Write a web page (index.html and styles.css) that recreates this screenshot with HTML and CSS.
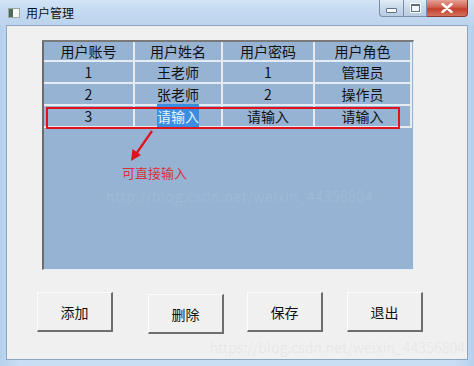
FILE: index.html
```html
<!DOCTYPE html>
<html lang="zh-CN">
  <head>
    <meta charset="UTF-8" />
    <title>用户管理</title>
    <link rel="stylesheet" href="styles.css">
  </head>
  <body>
    <div class="window">
      <div class="titlebar">
        <span class="app-icon"><span class="app-icon-side"></span></span>
        <span class="title">用户管理</span>
        <div class="caption-buttons">
          <span class="cap cap-min"><span class="glyph-min"></span></span>
          <span class="cap cap-max"><span class="glyph-max"></span></span>
          <span class="cap cap-close">
            <svg width="12" height="10" viewBox="0 0 12 10">
              <path d="M1.5 1 L10.5 9 M10.5 1 L1.5 9" stroke="#fff" stroke-width="2.4" stroke-linecap="round"/>
            </svg>
          </span>
        </div>
      </div>

      <div class="client">
        <div class="grid">
          <table class="users">
            <thead>
              <tr>
                <th class="c1">用户账号</th>
                <th class="c2">用户姓名</th>
                <th class="c3">用户密码</th>
                <th class="c4">用户角色</th>
              </tr>
            </thead>
            <tbody>
              <tr>
                <td>1</td>
                <td>王老师</td>
                <td>1</td>
                <td>管理员</td>
              </tr>
              <tr>
                <td>2</td>
                <td>张老师</td>
                <td>2</td>
                <td>操作员</td>
              </tr>
              <tr>
                <td>3</td>
                <td><span class="selected">请输入</span></td>
                <td>请输入</td>
                <td>请输入</td>
              </tr>
            </tbody>
          </table>

          <div class="grid-watermark">http://blog.csdn.net/weixin_44356804</div>

          <!-- annotation drawn over the grid -->
          <div class="red-box"></div>
          <svg class="arrow" width="30" height="32" viewBox="0 0 30 32">
            <path d="M24 1 L8 24" stroke="#e0121c" stroke-width="2.2" fill="none"/>
            <path d="M3 31 L4.5 19 L13 25 Z" fill="#e0121c"/>
          </svg>
          <div class="note">可直接输入</div>
        </div>

        <div class="buttons">
          <button class="btn">添加</button>
          <button class="btn btn-delete">删除</button>
          <button class="btn btn-save">保存</button>
          <button class="btn btn-exit">退出</button>
        </div>

        <div class="page-watermark">https://blog.csdn.net/weixin_44356804</div>
      </div>
    </div>
  </body>
</html>
```

FILE: styles.css
```css
body {
  margin: 0;
  width: 474px;
  height: 366px;
  overflow: hidden;
  font-family: "Noto Sans CJK SC", "Liberation Sans", sans-serif;
  background: #c4dbf2;
}

.window {
  width: 474px;
  height: 366px;
  display: flex;
  flex-direction: column;
  background: linear-gradient(to right, #b6d0ec 0%, #c9def3 4%, #c9def3 96%, #b6d0ec 100%);
}

/* title bar */
.titlebar {
  height: 25px;
  flex: none;
  display: flex;
  align-items: center;
  padding-left: 8px;
  background: linear-gradient(to bottom, #d2e4f6 0%, #c1d8f0 60%, #bcd4ed 100%);
  position: relative;
}
.app-icon {
  width: 10px;
  height: 8px;
  margin-top: 1px;
  background: #f6f8f6;
  border: 1px solid #9aa7a4;
  display: flex;
}
.app-icon-side {
  width: 4px;
  background: #4d6b5a;
}
.title {
  margin-left: 6px;
  font-size: 12px;
  color: #101010;
  line-height: 1;
}
.caption-buttons {
  position: absolute;
  top: 0;
  right: 6px;
  display: flex;
  height: 17px;
}
.cap {
  display: flex;
  align-items: center;
  justify-content: center;
  height: 16px;
  border: 1px solid #7a8ea6;
  border-top: none;
  box-sizing: content-box;
}
.cap-min {
  width: 23px;
  border-radius: 0 0 0 4px;
  background: linear-gradient(to bottom, #e2ecf7 0%, #c9d9ea 50%, #b9cce2 100%);
}
.cap-max {
  width: 22px;
  border-left: none;
  background: linear-gradient(to bottom, #e2ecf7 0%, #c9d9ea 50%, #b9cce2 100%);
}
.cap-close {
  width: 40px;
  border-left: none;
  border-color: #8d3a33;
  border-radius: 0 0 4px 0;
  background: linear-gradient(to bottom, #e6a295 0%, #d0604d 45%, #c2412e 55%, #d5705a 100%);
}
.glyph-min {
  width: 9px;
  height: 3px;
  margin-top: 4px;
  background: #fff;
  border: 1px solid #5d6f85;
  border-radius: 1px;
}
.glyph-max {
  width: 7px;
  height: 5px;
  border: 1px solid #5d6f85;
  border-top-width: 2px;
  background: #f4f7fb;
  box-shadow: 0 0 0 1px #fff;
}

/* client area */
.client {
  flex: 1;
  margin: 0 6px 6px 6px;
  background: #f0f0f0;
  border: 1px solid #8ba6c3;
  position: relative;
  display: flex;
  flex-direction: column;
  padding: 14px 0 0 35px;
}

.grid {
  width: 369px;
  height: 227px;
  background: #97b3d4;
  border-left: 2px solid #6c6c6c;
  border-top: 2px solid #7a7a7a;
  border-right: 1px solid #e6eef7;
  border-bottom: 1px solid #e6eef7;
  position: relative;
  flex: none;
}

.users {
  width: 368px;
  border-collapse: collapse;
  table-layout: fixed;
  font-size: 14px;
  color: #111;
}
.users th,
.users td {
  padding: 0;
  text-align: center;
  font-weight: normal;
  border-right: 2px solid #e4ebf3;
  border-bottom: 2px solid #e4ebf3;
  line-height: 1;
}
.users th {
  height: 18px;
}
.users td {
  height: 20px;
}
.users .c1 { width: 89px; }
.users .c2 { width: 86px; }
.users .c3 { width: 90px; }
.users .c4 { width: 95px; }

.selected {
  background: #3b8de0;
  color: #e8f2fc;
  padding: 2px 0 3px;
}

.grid-watermark {
  position: absolute;
  left: 62px;
  top: 144px;
  font-size: 14px;
  color: rgba(255, 255, 255, 0.09);
  letter-spacing: 0.5px;
}

.red-box {
  position: absolute;
  left: 2px;
  top: 65px;
  width: 350px;
  height: 18px;
  border: 2px solid #e0121c;
}
.arrow {
  position: absolute;
  left: 84px;
  top: 88px;
}
.note {
  position: absolute;
  left: 78px;
  top: 121px;
  font-size: 13px;
  color: #d72f3c;
}

/* buttons */
.buttons {
  display: flex;
  align-items: flex-start;
  margin-top: 22px;
  margin-left: -5px;
}
.btn {
  width: 76px;
  height: 40px;
  padding: 0;
  font-family: inherit;
  font-size: 14px;
  color: #111;
  background: #f0f0f0;
  border-top: 1px solid #fcfcfc;
  border-left: 1px solid #fcfcfc;
  border-right: 2px solid #6e6e6e;
  border-bottom: 2px solid #6e6e6e;
}
.btn-delete {
  margin-left: 35px;
  margin-top: 2px;
}
.btn-save {
  margin-left: 23px;
}
.btn-exit {
  margin-left: 24px;
}

.page-watermark {
  position: absolute;
  right: 2px;
  bottom: 2px;
  font-size: 14px;
  color: #e6e6e6;
  text-shadow: 0 0 1px #f8f8f8;
}
```
